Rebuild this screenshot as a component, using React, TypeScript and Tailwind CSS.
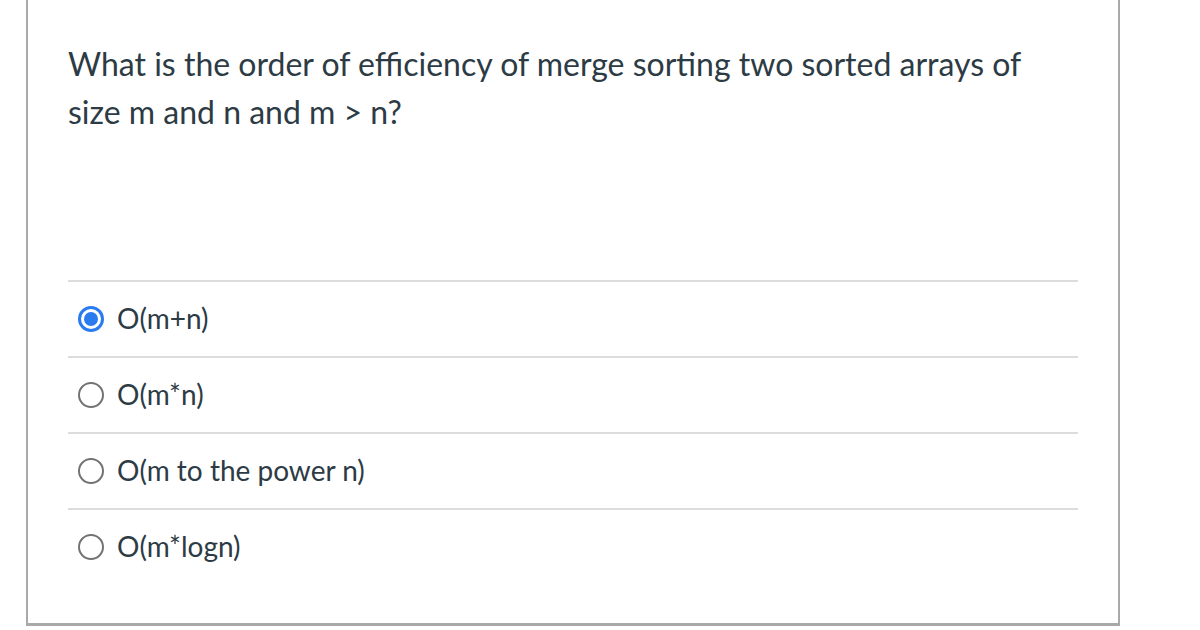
import React from "react";

const answers = ["O(m+n)", "O(m*n)", "O(m to the power n)", "O(m*logn)"];

function Radio({ checked }: { checked: boolean }) {
  if (checked) {
    return (
      <span className="flex h-[26px] w-[26px] shrink-0 items-center justify-center rounded-full border-[3px] border-[#2b7bf0] bg-white">
        <span className="h-[14px] w-[14px] rounded-full bg-[#2b7bf0]" />
      </span>
    );
  }
  return <span className="h-[26px] w-[26px] shrink-0 rounded-full border-2 border-[#737373] bg-white" />;
}

export default function App() {
  return (
    <div className="h-[630px] w-[1200px] bg-white" style={{ fontFamily: "Lato, 'Open Sans', sans-serif" }}>
      <div className="ml-[26px] h-[626px] w-[1094px] border-x-[2px] border-b-[3px] border-[#a9a9a9] bg-white px-[40px] pt-[40px]">
        <p className="text-[32px] leading-[48px] text-[#2d3b45]">
          What is the order of efficiency of merge sorting two sorted arrays of size m and n and m &gt; n?
        </p>
        <div className="mt-[144px]">
          {answers.map((a, i) => (
            <div key={a} className="flex h-[76px] items-center gap-[13px] border-t-2 border-[#dcdcdc] pl-[10px]">
              <Radio checked={i === 0} />
              <span className="-mt-[3px] text-[28px] text-[#2d3b45]">{a}</span>
            </div>
          ))}
        </div>
      </div>
    </div>
  );
}
